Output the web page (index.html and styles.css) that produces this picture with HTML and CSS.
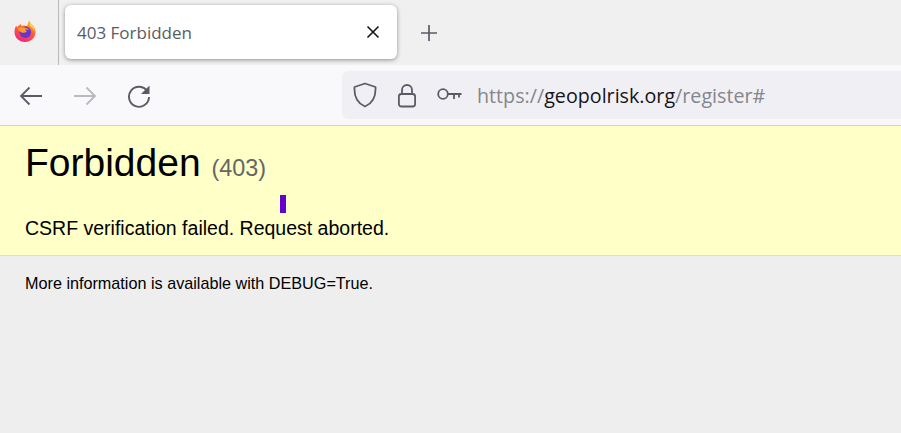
FILE: index.html
```html
<!DOCTYPE html>
<html lang="en">
<head>
    <meta charset="UTF-8">
    <meta name="viewport" content="width=device-width, initial-scale=1.0">
    <title>403 Forbidden</title>
    <link rel="stylesheet" href="styles.css">
</head>
<body>

<!-- Tab strip -->
<div class="tabbar">
    <div class="app-icon">
        <svg width="24" height="24" viewBox="0 0 24 24">
            <defs>
                <linearGradient id="foxBody" x1="0.7" y1="0" x2="0.3" y2="1">
                    <stop offset="0" stop-color="#ffb520"/>
                    <stop offset="0.5" stop-color="#ff5a3a"/>
                    <stop offset="1" stop-color="#f5217f"/>
                </linearGradient>
            </defs>
            <path d="M16 1c.6 2.500 2.400 3.600 3.800 5.400 1.800 2.200 2.700 4.400 2.700 6.600 0 5.800-4.700 10-10.500 10S1.500 18.800 1.500 13c0-2.600.6-4.800 1.800-6.600.2 1 .6 1.600 1.200 2 .6-1.600 2-2.800 3.800-3.400-.3.900-.2 1.500.3 1.900 2-.5 4-.4 5.600.2C15 5 15.500 3 16 1z" fill="url(#foxBody)"/>
            <path d="M16.800 3c1 2 2.600 3 3.600 5 .8 1.500 1.200 3 1.100 4.500-1-2.600-2.600-4.200-4.700-5.200-.3-1.500-.3-2.900 0-4.300z" fill="#ffd53a"/>
            <circle cx="12.300" cy="13.200" r="5.800" fill="#6a35c9"/>
            <path d="M4.500 9.500c2-1.300 4.500-1.600 7-1 2.400.5 4 1.400 5 2.900-1.500-.8-3-1-4.500-.6 1.200.5 1.700 1.300 1.500 2.300-1.400.7-3.300.8-4.800.3-1.700-.6-3.300-2-4.200-3.900z" fill="#ff9a2a"/>
        </svg>
    </div>
    <div class="tab">
        <span class="tab-title">403 Forbidden</span>
        <svg class="tab-close" width="14" height="14" viewBox="0 0 14 14">
            <path d="M1.500 1.500l11 11M12.500 1.500l-11 11" stroke="#15141a" stroke-width="1.600" fill="none"/>
        </svg>
    </div>
    <svg class="new-tab" width="18" height="18" viewBox="0 0 18 18">
        <path d="M9 1v16M1 9h16" stroke="#5b5b66" stroke-width="1.700" fill="none"/>
    </svg>
</div>

<!-- Navigation bar -->
<div class="navbar">
    <div class="nav-buttons">
        <svg width="24" height="20" viewBox="0 0 24 20">
            <path d="M23 10H2M10.500 1.500L2 10l8.500 8.500" stroke="#5b5b66" stroke-width="1.800" fill="none"/>
        </svg>
        <svg width="24" height="20" viewBox="0 0 24 20">
            <path d="M1 10h21M13.500 1.500L22 10l-8.500 8.500" stroke="#b9b9bf" stroke-width="1.800" fill="none"/>
        </svg>
        <svg width="24" height="24" viewBox="0 0 24 24">
            <path d="M20.500 7.500A10 10 0 1 0 22 13" stroke="#5b5b66" stroke-width="1.900" fill="none"/>
            <path d="M22.500 1.500v8.500H14z" fill="#5b5b66"/>
        </svg>
    </div>
    <div class="urlbar">
        <svg width="24" height="26" viewBox="0 0 24 26">
            <path d="M12 1.500L22.500 5c.5 9-2 16-10.500 19.500C3.500 21 1 14 1.500 5z" stroke="#5b5b66" stroke-width="1.800" fill="none" stroke-linejoin="round"/>
        </svg>
        <svg width="20" height="25" viewBox="0 0 20 25">
            <path d="M5 11V7a5 5 0 0 1 10 0v4" stroke="#5b5b66" stroke-width="1.800" fill="none"/>
            <rect x="1.900" y="11" width="16.200" height="12.500" rx="2.500" stroke="#5b5b66" stroke-width="1.800" fill="none"/>
        </svg>
        <svg width="25" height="14" viewBox="0 0 25 14">
            <circle cx="6" cy="6" r="4.800" stroke="#5b5b66" stroke-width="1.800" fill="none"/>
            <path d="M11 6h13.500M17 6v5M22 6v3.500" stroke="#5b5b66" stroke-width="1.800" fill="none"/>
        </svg>
        <div class="url"><span class="url-dim">https://</span>geopolrisk.org<span class="url-dim">/register#</span></div>
    </div>
</div>

<!-- Error page -->
<div class="summary">
    <h1>Forbidden <span>(403)</span></h1>
    <p>CSRF verification failed. Request aborted.</p>
</div>
<div class="info">
    <p>More information is available with DEBUG=True.</p>
</div>

<div class="cursor-mark"></div>

</body>
</html>
```

FILE: styles.css
```css
html, body {
    margin: 0;
    padding: 0;
}
body {
    position: relative;
    height: 433px;
    overflow: hidden;
    background: #eeeeee;
    color: #000;
    font-family: "Liberation Sans", Arial, sans-serif;
}
.tabbar {
    height: 65px;
    background: #f0f0f0;
    display: flex;
    align-items: flex-start;
}
.app-icon {
    width: 59px;
    height: 65px;
    box-sizing: border-box;
    border-right: 1px solid #b8b8b8;
    padding: 19px 0 0 13px;
}
.tab {
    width: 332px;
    height: 54px;
    margin: 5px 0 0 6px;
    padding: 0 17px 0 12px;
    box-sizing: border-box;
    background: #fff;
    border-radius: 6px;
    box-shadow: 0 1px 4px rgba(0, 0, 0, 0.4);
    display: flex;
    align-items: center;
    justify-content: space-between;
}
.tab-title {
    font-family: "Open Sans", "Noto Sans", sans-serif;
    font-size: 17px;
    color: #5b5b66;
}
.new-tab {
    margin: 24px 0 0 23px;
}
.navbar {
    height: 60px;
    background: #f9f9fb;
    border-bottom: 1px solid #cfcfd8;
    display: flex;
    align-items: center;
}
.nav-buttons {
    width: 342px;
    padding: 2px 0 0 19px;
    box-sizing: border-box;
    display: flex;
    align-items: center;
    gap: 30px;
}
.urlbar {
    flex: 1;
    height: 48px;
    background: #f0f0f4;
    border-radius: 6px 0 0 6px;
    padding-left: 11px;
    display: flex;
    align-items: center;
    gap: 20px;
}
.url {
    font-family: "Open Sans", "Noto Sans", sans-serif;
    font-size: 19.700px;
    color: #15141a;
    margin-left: -5px;
}
.url-dim {
    color: #85858c;
}
.summary {
    height: 130px;
    box-sizing: border-box;
    background: #ffffc8;
    border-bottom: 1px solid #dddddd;
    padding: 14px 25px 0;
}
.summary h1 {
    margin: 0 0 26px;
    font-size: 39px;
    font-weight: normal;
    line-height: 46px;
}
.summary h1 span {
    font-size: 60%;
    color: #666;
}
.summary p {
    margin: 0;
    font-size: 19.500px;
    line-height: 22px;
}
.info {
    padding: 17px 25px 0;
}
.info p {
    margin: 0;
    font-size: 16.200px;
    line-height: 20px;
}
/* caret-like mark lying over the page */
.cursor-mark {
    position: absolute;
    left: 280px;
    top: 195px;
    width: 6px;
    height: 18px;
    background: #6600cc;
}
```
